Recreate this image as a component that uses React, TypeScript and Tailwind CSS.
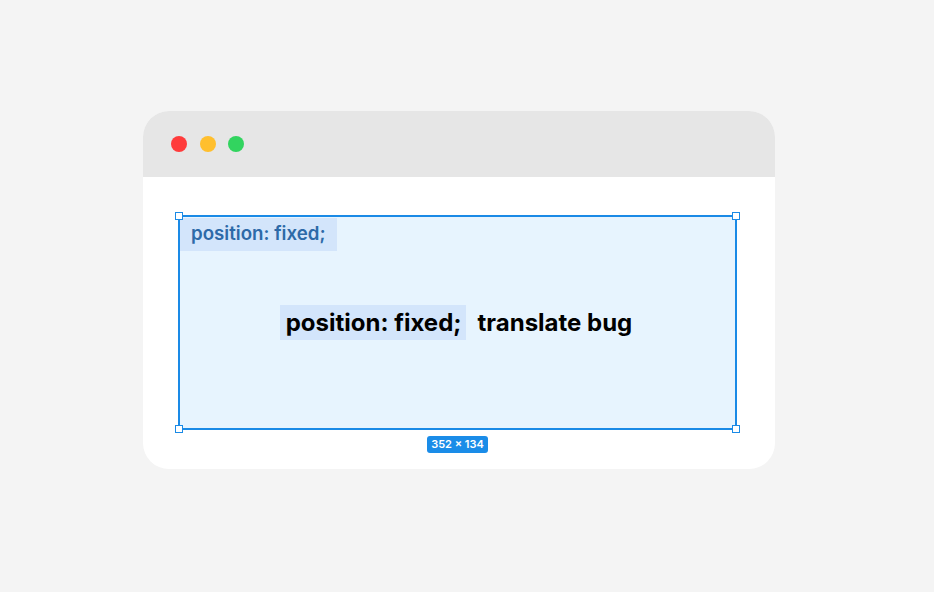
export default function App() {
  return (
    <div
      className="min-h-screen w-full bg-[#f4f4f4] pl-[143px] pt-[111px]"
      style={{ fontFamily: 'Inter, "Noto Sans", sans-serif' }}
    >
      {/* browser window */}
      <div className="w-[632px] h-[358px] rounded-[26px] overflow-hidden bg-white flex flex-col">
        <div className="h-[66px] bg-[#e6e6e6] flex items-center gap-[12.5px] pl-[28px] shrink-0">
          <span className="w-4 h-4 rounded-full bg-[#ff3b3b]" />
          <span className="w-4 h-4 rounded-full bg-[#ffbf2e]" />
          <span className="w-4 h-4 rounded-full bg-[#32d45f]" />
        </div>

        <div className="pt-[38px] pl-[35px] flex flex-col">
          <div className="relative w-[559px] h-[215px] border-2 border-[#1a8ae6] bg-[#e7f4fe] flex items-center justify-center">
            <div className="absolute top-px left-0 h-[33px] px-[11px] bg-[#d3e5fb] flex items-center text-[18.7px] font-semibold text-[#2d6aa8]">
              position: fixed;
            </div>

            <div className="flex items-center gap-3 -ml-[3px]">
              <span className="h-[35px] pl-[6px] pr-[4px] bg-[#d3e5fb] flex items-center text-[24px] font-bold text-black">
                position: fixed;
              </span>
              <span className="text-[24px] font-bold text-black">translate bug</span>
            </div>

            {/* selection handles */}
            <span className="absolute -top-[5px] -left-[5px] w-2 h-2 bg-white border border-[#1a8ae6]" />
            <span className="absolute -top-[5px] -right-[5px] w-2 h-2 bg-white border border-[#1a8ae6]" />
            <span className="absolute -bottom-[5px] -left-[5px] w-2 h-2 bg-white border border-[#1a8ae6]" />
            <span className="absolute -bottom-[5px] -right-[5px] w-2 h-2 bg-white border border-[#1a8ae6]" />
          </div>

          <div className="w-[559px] flex justify-center mt-[6px]">
            <span className="h-[17px] px-[4px] rounded-[3px] bg-[#1a8ce8] text-white text-[11px] font-semibold leading-[17px]">
              352 × 134
            </span>
          </div>
        </div>
      </div>
    </div>
  );
}
